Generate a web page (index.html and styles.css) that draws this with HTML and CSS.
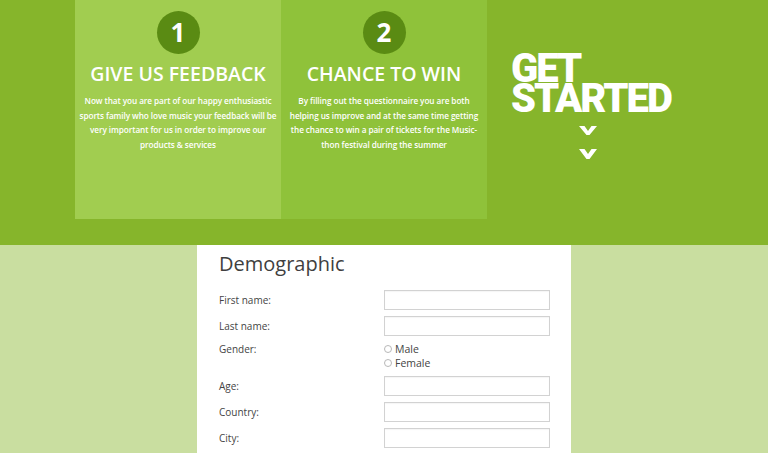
FILE: index.html
```html
<!DOCTYPE html>
<html>
<head>
<meta charset="utf-8">
<link rel="stylesheet" href="styles.css">
</head>
<body>
<header class="hero">
  <div class="hero-inner">
    <section class="step step-one">
      <div class="num">1</div>
      <h2 class="step-title">GIVE US FEEDBACK</h2>
      <p class="step-text">Now that you are part of our happy enthusiastic sports family who love music your feedback will be very important for us in order to improve our products &amp; services</p>
    </section>
    <section class="step step-two">
      <div class="num">2</div>
      <h2 class="step-title">CHANCE TO WIN</h2>
      <p class="step-text">By filling out the questionnaire you are both helping us improve and at the same time getting the chance to win a pair of tickets for the Music-thon festival during the summer</p>
    </section>
    <section class="start">
      <div class="start-line">GET</div>
      <div class="start-line">STARTED</div>
      <svg class="chevrons" width="18" height="36" viewBox="0 0 18 36">
        <polygon points="0,0 5.5,0 9,5 12.5,0 18,0 10.5,9 7.5,9" fill="#fff"/>
        <polygon points="0,23 5.5,23 9,28 12.5,23 18,23 10.5,33 7.5,33" fill="#fff"/>
      </svg>
    </section>
  </div>
</header>
<main class="lower">
  <div class="card">
    <h1 class="card-title">Demographic</h1>
    <div class="row">
      <label class="lbl">First name:</label>
      <input class="field" type="text">
    </div>
    <div class="row">
      <label class="lbl">Last name:</label>
      <input class="field" type="text">
    </div>
    <div class="row row-radio">
      <label class="lbl lbl-radio">Gender:</label>
      <div class="radios">
        <div class="radio-line"><span class="radio"></span>Male</div>
        <div class="radio-line"><span class="radio"></span>Female</div>
      </div>
    </div>
    <div class="row">
      <label class="lbl">Age:</label>
      <input class="field" type="text">
    </div>
    <div class="row">
      <label class="lbl">Country:</label>
      <input class="field" type="text">
    </div>
    <div class="row">
      <label class="lbl">City:</label>
      <input class="field" type="text">
    </div>
  </div>
</main>
</body>
</html>
```

FILE: styles.css
```css
* { box-sizing: border-box; }
html, body { margin: 0; padding: 0; }
body {
  font-family: "Open Sans", "Noto Sans", sans-serif;
  background: #c9dea0;
  overflow: hidden;
}
.hero {
  background: #86b52b;
  height: 245px;
}
.hero-inner {
  width: 618px;
  margin: 0 auto;
  display: grid;
  grid-template-columns: 206px 206px 206px;
}
.step {
  height: 219px;
  padding: 11px 3px 0;
  text-align: center;
  color: #fff;
}
.step-one { background: #a1cd50; }
.step-two { background: #8fc23a; }
.num {
  width: 43px;
  height: 43px;
  margin: 0 auto;
  border-radius: 50%;
  background: #5a8b13;
  color: #fff;
  font-weight: 700;
  font-size: 26px;
  line-height: 43px;
}
.step-title {
  margin: 8px 0 0;
  font-size: 19.5px;
  line-height: 24px;
  font-weight: 600;
}
.step-text {
  margin: 8px 0 0;
  font-size: 8.2px;
  line-height: 14.5px;
  font-weight: 600;
  letter-spacing: -0.07px;
}
.start {
  padding: 54px 0 0 24px;
}
.start-line {
  font-family: Roboto, "Liberation Sans", sans-serif;
  font-weight: 900;
  font-size: 40px;
  line-height: 30px;
  height: 30px;
  letter-spacing: -2px;
  color: #fff;
  white-space: nowrap;
}
.chevrons {
  display: block;
  margin: 12px 0 0 68px;
}
.lower {
  display: flex;
  justify-content: center;
}
.card {
  width: 374px;
  min-height: 300px;
  background: #fff;
  padding: 7px 21px 0 22px;
}
.card-title {
  margin: 0 0 14px;
  font-size: 20px;
  line-height: 24px;
  font-weight: 500;
  color: #3f3f3f;
}
.row {
  display: flex;
  align-items: center;
  margin-bottom: 6px;
}
.row-radio { align-items: flex-start; }
.lbl {
  width: 165px;
  font-size: 10px;
  line-height: 20px;
  color: #444;
}
.lbl-radio { line-height: 14px; }
.field {
  width: 166px;
  height: 20px;
  margin: 0;
  border: 1px solid #d2d2d2;
  background: #fff;
  box-shadow: inset 0 1px 1px rgba(0,0,0,0.04);
}
.radios {
  font-size: 10.5px;
  color: #444;
}
.radio-line {
  display: flex;
  align-items: center;
  height: 14px;
}
.radio {
  width: 8px;
  height: 8px;
  border: 1px solid #b8b8b8;
  border-radius: 50%;
  margin-right: 3px;
  background: #fff;
}
```
